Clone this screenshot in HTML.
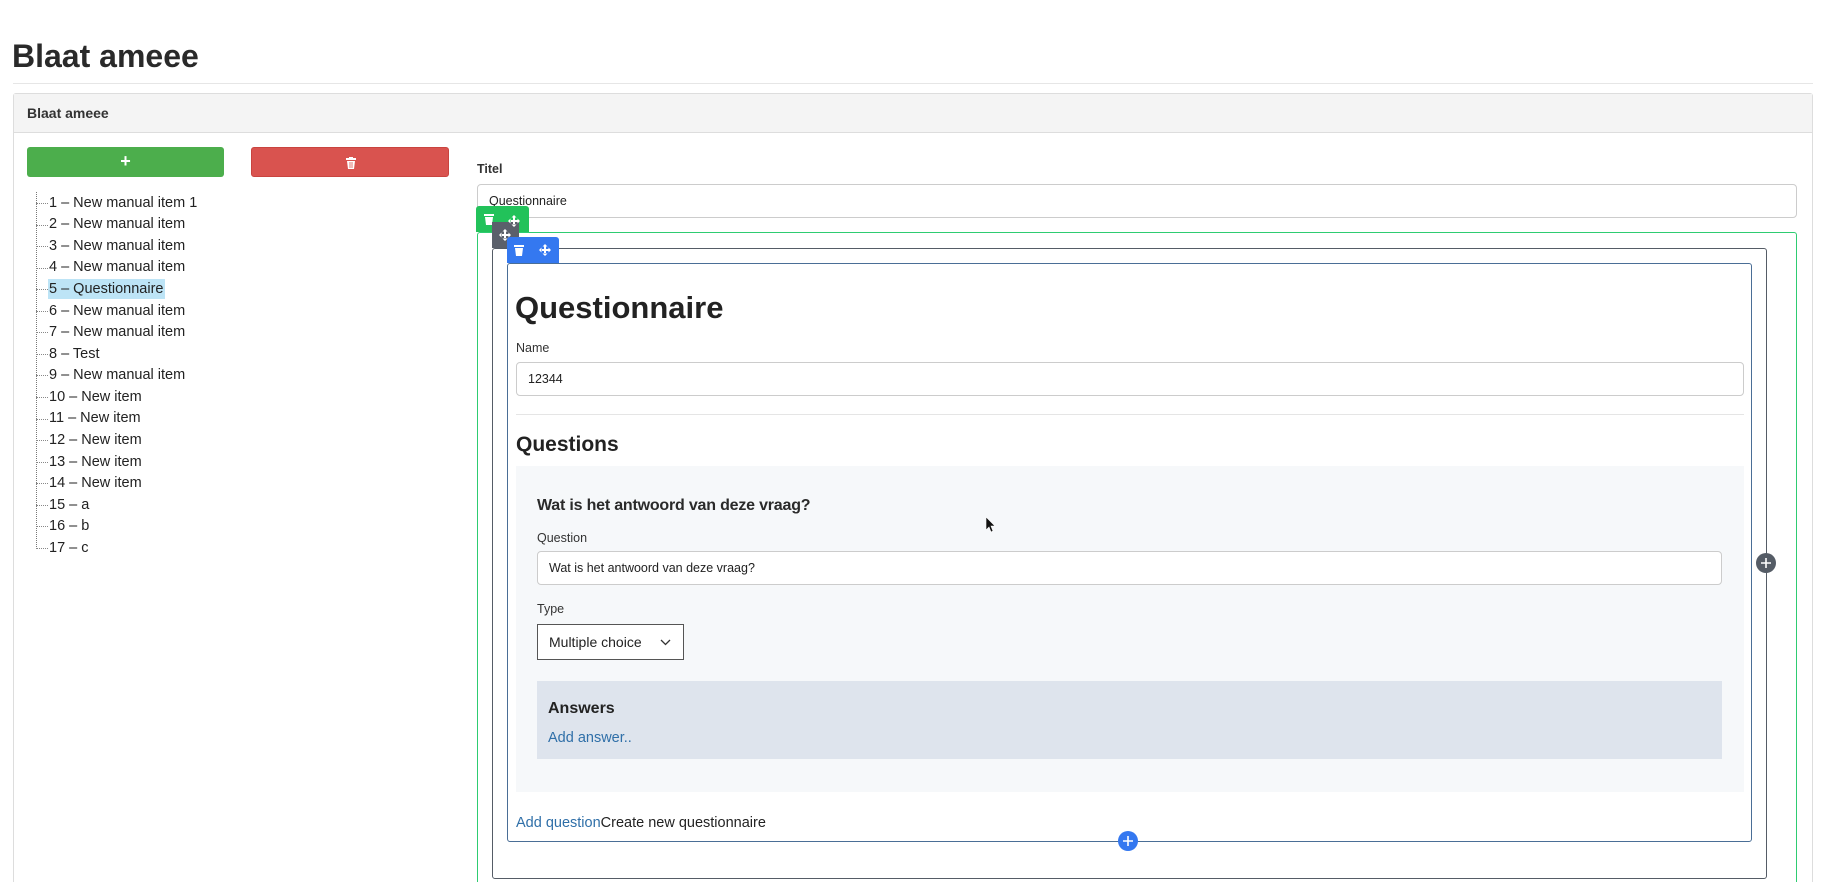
<!DOCTYPE html>
<html style="overflow:hidden;height:882px"><head><meta charset="utf-8"><style>
*{box-sizing:border-box;margin:0;padding:0}
body{width:1828px;height:882px;overflow:hidden;background:#fff;font-family:"Liberation Sans",sans-serif;color:#222}
#w{position:relative;width:1828px;height:882px;overflow:hidden}
.a{position:absolute}
.inp{position:absolute;border:1px solid #ccc;border-radius:4px;background:#fff;font-size:12.5px;padding-left:11px;display:flex;align-items:center;color:#222}
.lbl{position:absolute;font-size:12.5px;color:#333}
.tree div{position:absolute;left:49px;font-size:14.5px;color:#222;line-height:20px;white-space:nowrap}
.tree span.t{position:absolute;left:36px;width:12px;border-top:1px dotted #888}
svg{display:block}
</style></head><body><div id="w">
<div class="a" style="left:12px;top:38px;font-size:32px;font-weight:bold;color:#2a2a2a">Blaat ameee</div>
<div class="a" style="left:13px;top:83px;width:1800px;border-top:1px solid #e6e6e6"></div>
<div class="a" style="left:13px;top:93px;width:1800px;height:789px;border:1px solid #ddd;border-bottom:none;border-radius:3px 3px 0 0"></div>
<div class="a" style="left:14px;top:94px;width:1798px;height:39px;background:#f4f4f4;border-bottom:1px solid #ddd"></div>
<div class="a" style="left:27px;top:105px;font-size:14px;font-weight:bold;color:#333">Blaat ameee</div>
<div class="a" style="left:27px;top:147px;width:197px;height:30px;background:#4cae4c;border-radius:3px;color:#fff;font-weight:bold;font-size:18px;text-align:center;line-height:29px">+</div>
<div class="a" style="left:251px;top:147px;width:198px;height:30px;background:#d9534f;border:1px solid #c9443f;border-radius:3px"><svg style="position:absolute;left:94px;top:9px" width="10" height="12" viewBox="0 0 10 12"><rect x="0" y="1" width="10" height="2" fill="#fff"/><rect x="3" y="0" width="4" height="2" fill="#fff"/><path d="M1 4h8l-1 8H2z" fill="#fff"/><path d="M4 5v6M6 5v6" stroke="#d9534f" stroke-width=".8"/></svg></div>
<div class="tree">
<div class="a" style="left:36px;top:192px;height:357px;border-left:1px dotted #777;position:absolute"></div>
<div style="top:193px">1 – New manual item 1</div>
<div style="top:214px">2 – New manual item</div>
<div style="top:236px">3 – New manual item</div>
<div style="top:257px">4 – New manual item</div>
<div style="top:279px;background:#bde4f6;left:48px;padding:0 2px 0 1px">5 – Questionnaire</div>
<div style="top:301px">6 – New manual item</div>
<div style="top:322px">7 – New manual item</div>
<div style="top:344px">8 – Test</div>
<div style="top:365px">9 – New manual item</div>
<div style="top:387px">10 – New item</div>
<div style="top:408px">11 – New item</div>
<div style="top:430px">12 – New item</div>
<div style="top:452px">13 – New item</div>
<div style="top:473px">14 – New item</div>
<div style="top:495px">15 – a</div>
<div style="top:516px">16 – b</div>
<div style="top:538px">17 – c</div>
<span class="t" style="top:203px"></span><span class="t" style="top:225px"></span><span class="t" style="top:246px"></span><span class="t" style="top:268px"></span><span class="t" style="top:289px"></span><span class="t" style="top:311px"></span><span class="t" style="top:332px"></span><span class="t" style="top:354px"></span><span class="t" style="top:375px"></span><span class="t" style="top:397px"></span><span class="t" style="top:419px"></span><span class="t" style="top:440px"></span><span class="t" style="top:462px"></span><span class="t" style="top:483px"></span><span class="t" style="top:505px"></span><span class="t" style="top:526px"></span><span class="t" style="top:548px"></span>
</div>

<div class="lbl" style="left:477px;top:162px;font-weight:bold">Titel</div>
<div class="inp" style="left:477px;top:184px;width:1320px;height:34px">Questionnaire</div>

<div class="a" style="left:477px;top:232px;width:1320px;height:650px;border:1px solid #2ecc71;border-bottom:none;border-radius:3px 3px 0 0"></div>
<div class="a" style="left:492px;top:248px;width:1275px;height:631px;border:1px solid #555c66;border-radius:3px"></div>
<div class="a" style="left:507px;top:263px;width:1245px;height:579px;border:1px solid #4a6e96;border-radius:3px"></div>

<div class="a" style="left:476px;top:206px;width:53px;height:26px;background:#22c25a;border-radius:3px 3px 0 0"></div>
<svg class="a" style="left:484px;top:213px" width="10" height="12" viewBox="0 0 10 12"><rect y="1" width="10" height="2" fill="#fff"/><path d="M1 4h8l-1 8H2z" fill="#fff"/></svg>
<div class="a" style="left:492px;top:222px;width:27px;height:26px;background:#5b606b"></div>
<div class="a" style="left:507px;top:237px;width:52px;height:26px;background:#3478f0;border-radius:3px 3px 0 0"></div>
<svg class="a" style="left:514px;top:244px" width="10" height="12" viewBox="0 0 10 12"><rect y="1" width="10" height="2" fill="#fff"/><path d="M1 4h8l-1 8H2z" fill="#fff"/></svg>
<svg class="a" style="left:508px;top:215px" width="12" height="12" viewBox="0 0 12 12"><path d="M6 0l2.5 2.5h-5zM6 12l2.5-2.5h-5zM0 6l2.5 2.5v-5zM12 6l-2.5 2.5v-5z M5 2h2v8H5z M2 5h8v2H2z" fill="#fff"/></svg>
<svg class="a" style="left:499px;top:229px" width="12" height="12" viewBox="0 0 12 12"><path d="M6 0l2.5 2.5h-5zM6 12l2.5-2.5h-5zM0 6l2.5 2.5v-5zM12 6l-2.5 2.5v-5z M5 2h2v8H5z M2 5h8v2H2z" fill="#fff"/></svg>
<svg class="a" style="left:539px;top:244px" width="12" height="12" viewBox="0 0 12 12"><path d="M6 0l2.5 2.5h-5zM6 12l2.5-2.5h-5zM0 6l2.5 2.5v-5zM12 6l-2.5 2.5v-5z M5 2h2v8H5z M2 5h8v2H2z" fill="#fff"/></svg>

<div class="a" style="left:515px;top:290px;font-size:31px;font-weight:bold;color:#222">Questionnaire</div>
<div class="lbl" style="left:516px;top:341px">Name</div>
<div class="inp" style="left:516px;top:362px;width:1228px;height:34px">12344</div>
<div class="a" style="left:516px;top:414px;width:1228px;border-top:1px solid #e5e5e5"></div>
<div class="a" style="left:516px;top:433px;font-size:21px;font-weight:bold;color:#222">Questions</div>
<div class="a" style="left:516px;top:466px;width:1228px;height:326px;background:#f6f8fa"></div>
<div class="a" style="left:537px;top:497px;font-size:16px;font-weight:bold;color:#2a2a2a;letter-spacing:-.2px">Wat is het antwoord van deze vraag?</div>
<div class="lbl" style="left:537px;top:531px">Question</div>
<div class="inp" style="left:537px;top:551px;width:1185px;height:34px">Wat is het antwoord van deze vraag?</div>
<div class="lbl" style="left:537px;top:602px">Type</div>
<div class="a" style="left:537px;top:624px;width:147px;height:36px;border:1px solid #555;background:#fff;font-size:14px;padding-left:11px;line-height:34px">Multiple choice<svg style="position:absolute;left:122px;top:14px" width="11" height="7" viewBox="0 0 11 7"><path d="M1 1l4.5 4.5L10 1" stroke="#333" stroke-width="1.3" fill="none"/></svg></div>
<div class="a" style="left:537px;top:681px;width:1185px;height:78px;background:#dee4ed"></div>
<div class="a" style="left:548px;top:700px;font-size:16px;font-weight:bold;color:#222">Answers</div>
<div class="a" style="left:548px;top:730px;font-size:14.5px;color:#2f6fa8">Add answer..</div>
<div class="a" style="left:516px;top:815px;font-size:14.5px;color:#222"><span style="color:#2f6fa8">Add question</span>Create new questionnaire</div>

<div class="a" style="left:1118px;top:831px;width:20px;height:20px;border-radius:50%;background:#3478f0"><svg width="20" height="20"><path d="M10 5v10M5 10h10" stroke="#fff" stroke-width="1.6"/></svg></div>
<div class="a" style="left:1756px;top:553px;width:20px;height:20px;border-radius:50%;background:#555c66"><svg width="20" height="20"><path d="M10 5v10M5 10h10" stroke="#fff" stroke-width="1.6"/></svg></div>
<svg class="a" style="left:986px;top:517px" width="10" height="16" viewBox="0 0 10 16"><path d="M0 0v13l3-3 2 5 2-1-2-5h4z" fill="#111" stroke="#fff" stroke-width=".6"/></svg>
</div></body></html>
